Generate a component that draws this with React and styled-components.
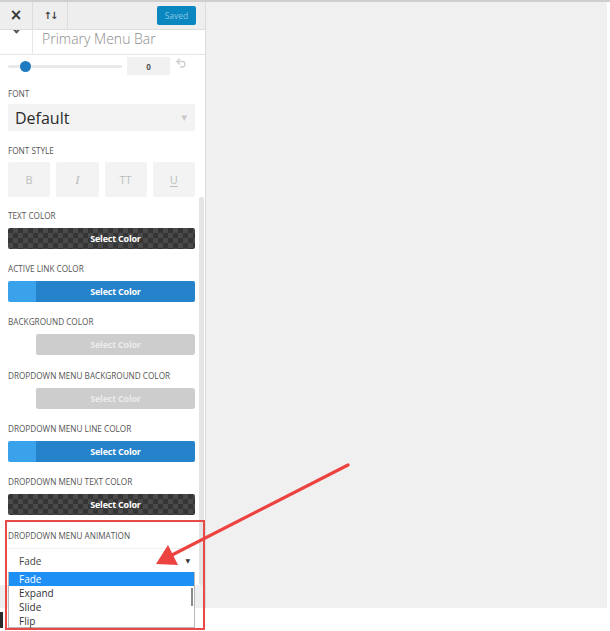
import React from "react";
import styled, { createGlobalStyle, css } from "styled-components";
import { Undo2 } from "lucide-react";

const GlobalStyle = createGlobalStyle`
  html, body {
    margin: 0;
    padding: 0;
    background: #fff;
  }
  body {
    font-family: "Open Sans", "Noto Sans", sans-serif;
    color: #444;
  }
  * { box-sizing: border-box; }
`;

const COLOR_ROWS = [
  { label: "Text Color", kind: "checker", top: 13 },
  { label: "Active Link Color", kind: "blue", top: 14 },
  { label: "Background Color", kind: "empty", top: 14 },
  { label: "Dropdown Menu Background Color", kind: "empty", top: 15 },
  { label: "Dropdown Menu Line Color", kind: "blue", top: 14 },
  { label: "Dropdown Menu Text Color", kind: "checker", top: 14 },
];

const ANIMATIONS = ["Fade", "Expand", "Slide", "Flip"];

function ColorBar({ kind }) {
  return (
    <Bar $kind={kind}>
      <Swatch $kind={kind} />
      <BarText $kind={kind}>Select Color</BarText>
    </Bar>
  );
}

export default function App() {
  return (
    <Page>
      <GlobalStyle />
      <TopLine />
      <Main>
        <Sidebar>
          <Header>
            <HeadCell>
              <Close>×</Close>
            </HeadCell>
            <HeadCell $wide>
              <Sort>↑↓</Sort>
            </HeadCell>
            <SavedButton>Saved</SavedButton>
          </Header>
          <TitleRow>
            <BackCell>
              <Chevron />
            </BackCell>
            <Title>Primary Menu Bar</Title>
          </TitleRow>
          <Scroller>
            <Content>
              <SliderRow>
                <Track>
                  <Thumb />
                </Track>
                <NumBox>0</NumBox>
                <Reset>
                  <Undo2 size={12} strokeWidth={2.6} />
                </Reset>
              </SliderRow>

              <Section $top={13}>
                <Label $mb={4}>Font</Label>
                <FontSelect>
                  <span>Default</span>
                  <Caret>▾</Caret>
                </FontSelect>
              </Section>

              <Section $top={14}>
                <Label $mb={5}>Font Style</Label>
                <StyleGrid>
                  <StyleBtn>B</StyleBtn>
                  <StyleBtn $italic>I</StyleBtn>
                  <StyleBtn>TT</StyleBtn>
                  <StyleBtn $underline>U</StyleBtn>
                </StyleGrid>
              </Section>

              {COLOR_ROWS.map((row) => (
                <Section key={row.label} $top={row.top}>
                  <Label $mb={6}>{row.label}</Label>
                  <ColorBar kind={row.kind} />
                </Section>
              ))}

              <Section $top={15}>
                <Label $mb={6}>Dropdown Menu Animation</Label>
                <AnimSelect>
                  <span>Fade</span>
                  <SmallCaret>▼</SmallCaret>
                </AnimSelect>
              </Section>
            </Content>
            <ScrollTrack>
              <ScrollThumb />
            </ScrollTrack>
          </Scroller>
          <SidebarFooter />
        </Sidebar>
        <Preview />
      </Main>
      <BottomStrip>
        <Stub />
      </BottomStrip>

      <OptionList>
        {ANIMATIONS.map((a, i) => (
          <Option key={a} $active={i === 0}>
            {a}
          </Option>
        ))}
        <ListScroll />
      </OptionList>
      <Highlight />
      <Arrow width="610" height="631" viewBox="0 0 610 631">
        <line x1="348" y1="465" x2="172" y2="555" stroke="#ec4341" strokeWidth="3.2" strokeLinecap="round" />
        <polygon points="156,564 168,545 178,565" fill="#ec4341" />
      </Arrow>
    </Page>
  );
}

const Page = styled.div`
  position: relative;
  width: 610px;
  height: 631px;
  overflow: hidden;
  display: flex;
  flex-direction: column;
  background: #fff;
`;

const TopLine = styled.div`
  height: 2px;
  background: #cfcfcf;
`;

const Main = styled.div`
  display: flex;
  height: 606px;
`;

const Sidebar = styled.div`
  width: 206px;
  display: flex;
  flex-direction: column;
  background: #fff;
  border-right: 1px solid #dcdcdc;
`;

const Header = styled.div`
  height: 28px;
  display: flex;
  align-items: center;
  background: #eeeeee;
  border-bottom: 1px solid #dddddd;
`;

const HeadCell = styled.div`
  width: ${(p) => (p.$wide ? 35 : 33)}px;
  height: 100%;
  display: flex;
  align-items: center;
  justify-content: center;
  border-right: 1px solid #dddddd;
`;

const Close = styled.span`
  font-family: "DejaVu Sans", sans-serif;
  font-size: 15px;
  font-weight: bold;
  color: #333;
  line-height: 1;
`;

const Sort = styled.span`
  font-family: "DejaVu Sans", sans-serif;
  font-size: 10px;
  font-weight: bold;
  letter-spacing: -2px;
  color: #444;
`;

const SavedButton = styled.div`
  margin-left: auto;
  margin-right: 9px;
  width: 39px;
  height: 19px;
  border-radius: 2px;
  background: #0a87bf;
  color: #86c4e2;
  font-size: 8.5px;
  display: flex;
  align-items: center;
  justify-content: center;
`;

const TitleRow = styled.div`
  height: 25px;
  display: flex;
  align-items: flex-start;
  border-bottom: 1px solid #e6e6e6;
`;

const BackCell = styled.div`
  width: 33px;
  height: 100%;
  border-right: 1px solid #e6e6e6;
  overflow: hidden;
  display: flex;
  justify-content: center;
`;

const Chevron = styled.div`
  width: 7px;
  height: 7px;
  margin-top: -5px;
  border-left: 2px solid #555;
  border-bottom: 2px solid #555;
  transform: rotate(-45deg);
`;

const Title = styled.div`
  padding-left: 9px;
  font-size: 14px;
  font-weight: 300;
  line-height: 17px;
  color: #8c8c8c;
`;

const Scroller = styled.div`
  flex: 1;
  display: flex;
  overflow: hidden;
`;

const Content = styled.div`
  flex: 1;
  padding: 0 4px 0 8px;
`;

const ScrollTrack = styled.div`
  width: 5px;
  margin-right: 1px;
  display: flex;
  flex-direction: column;
  padding-top: 142px;
`;

const ScrollThumb = styled.div`
  flex: 1;
  background: #e4e4e4;
  border-radius: 2px;
`;

const SidebarFooter = styled.div`
  height: 23px;
  background: #eeeeee;
`;

const SliderRow = styled.div`
  margin-top: 2px;
  height: 18px;
  display: flex;
  align-items: center;
`;

const Track = styled.div`
  position: relative;
  width: 114px;
  height: 3px;
  border-radius: 2px;
  background: #e9e9e9;
`;

const Thumb = styled.div`
  position: absolute;
  left: 12px;
  top: -4px;
  width: 11px;
  height: 11px;
  border-radius: 50%;
  background: #1f7bc1;
`;

const NumBox = styled.div`
  margin-left: 5px;
  width: 43px;
  height: 18px;
  background: #f1f1f1;
  display: flex;
  align-items: center;
  justify-content: center;
  font-size: 8px;
  font-weight: bold;
  color: #555;
`;

const Reset = styled.div`
  margin-left: 5px;
  margin-top: -6px;
  color: #cfcfcf;
  display: flex;
`;

const Section = styled.div`
  margin-top: ${(p) => p.$top}px;
`;

const Label = styled.div`
  font-size: 8.2px;
  line-height: 12px;
  text-transform: uppercase;
  color: #555;
  margin-bottom: ${(p) => p.$mb}px;
  white-space: nowrap;
`;

const FontSelect = styled.div`
  height: 27px;
  background: #f3f3f3;
  display: flex;
  align-items: center;
  padding: 0 8px 0 7px;
  font-size: 16px;
  color: #2b2b2b;
  justify-content: space-between;
`;

const Caret = styled.span`
  font-size: 11px;
  color: #c8c8c8;
  font-family: "DejaVu Sans", sans-serif;
`;

const StyleGrid = styled.div`
  display: grid;
  grid-template-columns: repeat(4, 1fr);
  gap: 6px;
`;

const StyleBtn = styled.div`
  height: 35px;
  border-radius: 2px;
  background: #f3f3f3;
  display: flex;
  align-items: center;
  justify-content: center;
  font-size: 11px;
  color: #bdbdbd;
  ${(p) =>
    p.$italic &&
    css`
      font-family: "Liberation Serif", serif;
      font-style: italic;
      font-size: 13px;
    `}
  ${(p) =>
    p.$underline &&
    css`
      text-decoration: underline;
      text-underline-offset: 2px;
    `}
`;

const checker = css`
  background-color: #3b3b3b;
  background-image: repeating-conic-gradient(#4a4a4a 0 25%, #353535 0 50%);
  background-size: 10px 10px;
`;

const Bar = styled.div`
  height: 21px;
  border-radius: 2px;
  display: flex;
  overflow: hidden;
  ${(p) => p.$kind === "checker" && checker}
`;

const Swatch = styled.div`
  width: 28px;
  background: ${(p) => (p.$kind === "blue" ? "#39a2ea" : "transparent")};
`;

const BarText = styled.div`
  flex: 1;
  display: flex;
  align-items: center;
  justify-content: center;
  border-radius: ${(p) => (p.$kind === "empty" ? "2px" : "0")};
  font-size: 9px;
  font-weight: bold;
  letter-spacing: -0.2px;
  color: ${(p) => (p.$kind === "empty" ? "#ebebeb" : "#fff")};
  background: ${(p) =>
    p.$kind === "blue" ? "#2483cb" : p.$kind === "empty" ? "#cdcdcd" : "transparent"};
`;

const AnimSelect = styled.div`
  height: 24px;
  display: flex;
  align-items: center;
  justify-content: space-between;
  padding: 0 5px 0 11px;
  border-top: 1px solid #f0f0f0;
  font-size: 10px;
  color: #444;
`;

const SmallCaret = styled.span`
  font-family: "DejaVu Sans", sans-serif;
  font-size: 6px;
  color: #333;
`;

const Preview = styled.div`
  flex: 1;
  margin-right: 3px;
  background: #f0f0f0;
`;

const BottomStrip = styled.div`
  flex: 1;
  padding-top: 4px;
`;

const Stub = styled.div`
  width: 3px;
  height: 16px;
  background: #2a2a2a;
`;

const OptionList = styled.div`
  position: absolute;
  left: 8px;
  top: 572px;
  width: 187px;
  height: 56px;
  background: #fff;
  border: 1px solid #b8b8b8;
  border-top: none;
`;

const Option = styled.div`
  height: 14px;
  line-height: 14px;
  padding-left: 10px;
  font-size: 10px;
  color: ${(p) => (p.$active ? "#fff" : "#333")};
  background: ${(p) => (p.$active ? "#1e8ff5" : "transparent")};
`;

const ListScroll = styled.div`
  position: absolute;
  right: 1px;
  top: 16px;
  width: 2px;
  height: 18px;
  background: #8a8a8a;
`;

const Highlight = styled.div`
  position: absolute;
  left: 5px;
  top: 520px;
  width: 200px;
  height: 110px;
  border: 2px solid #e84a47;
  pointer-events: none;
`;

const Arrow = styled.svg`
  position: absolute;
  left: 0;
  top: 0;
  pointer-events: none;
`;
